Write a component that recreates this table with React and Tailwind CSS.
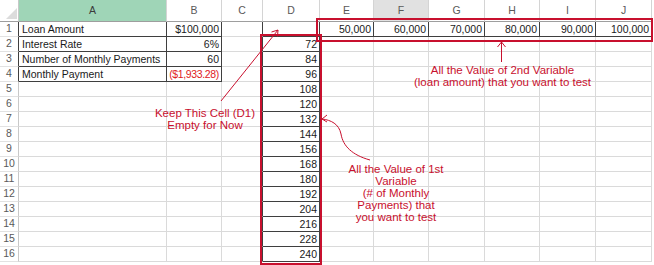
const cols = ["A", "B", "C", "D", "E", "F", "G", "H", "I", "J"];

const cells = {
  A1: "Loan Amount",
  B1: "$100,000",
  A2: "Interest Rate",
  B2: "6%",
  A3: "Number of Monthly Payments",
  B3: "60",
  A4: "Monthly Payment",
  B4: "($1,933.28)",
  E1: "50,000",
  F1: "60,000",
  G1: "70,000",
  H1: "80,000",
  I1: "90,000",
  J1: "100,000",
};
for (let r = 2; r <= 16; r++) cells["D" + r] = String(72 + (r - 2) * 12);

// cells with a dark outline, by column index (0 = A) and row
const isBordered = (c, r) => {
  if (c < 0 || c > 9 || r < 1 || r > 16) return false;
  if (r <= 4 && c <= 1) return true;
  if (c === 3) return true;
  if (r === 1 && c >= 4) return true;
  return false;
};

const Cell = ({ c, r }) => {
  const key = cols[c] + r;
  const value = cells[key];
  const rightDark = isBordered(c, r) || isBordered(c + 1, r);
  const bottomDark = isBordered(c, r) || isBordered(c, r + 1);
  const alignLeft = c === 0;
  return (
    <div
      className={
        "flex items-center overflow-hidden whitespace-nowrap border-r border-b pt-px leading-[13px] " +
        (rightDark ? "border-r-[#3f3f3f] " : "border-r-[#dadada] ") +
        (bottomDark ? "border-b-[#3f3f3f] " : "border-b-[#dadada] ") +
        (alignLeft ? "justify-start pl-[3px] " : "justify-end pr-[2px] ") +
        (key === "B4" ? "text-[#e0201b] tracking-[-0.35px]" : "text-[#1a1a1a]")
      }
    >
      {value}
    </div>
  );
};

const RowHead = ({ r }) => (
  <div
    className={
      "flex items-center justify-center border-r border-b border-b-[#e2e2e2] text-[#595959] bg-white " +
      (r <= 4 ? "border-r-[#3f3f3f]" : "border-r-[#c8c8c8]")
    }
  >
    {r}
  </div>
);

const ColHead = ({ c }) => (
  <div
    className={
      "flex items-center justify-center border-r border-r-[#d4d4d4] border-b border-b-[#9e9e9e] " +
      (c === 0
        ? "bg-[#9fd5b7] text-[#3b3b3b]"
        : c === 5
        ? "bg-[#e1e1e1] text-[#595959]"
        : "bg-white text-[#595959]")
    }
  >
    {cols[c]}
  </div>
);

const Note = ({ className, lines }) => (
  <div
    className={
      "absolute flex flex-col items-center text-[11.5px] leading-[12px] text-[#c8102e] whitespace-nowrap " + className
    }
  >
    {lines.map((l) => (
      <span key={l}>{l}</span>
    ))}
  </div>
);

export default function App() {
  return (
    <div className="relative h-[265px] w-[654px] overflow-hidden bg-white font-['Liberation_Sans',Arial,sans-serif] text-[10.5px]">
      <div className="grid grid-cols-[19px_148px_55px_41px_57px_54px_55px_56px_55px_56px_56px] grid-rows-[22px_repeat(16,15px)]">
        <div className="relative border-r border-r-[#c8c8c8] border-b border-b-[#9e9e9e] bg-white">
          <svg className="absolute left-[6px] top-[8px]" width="11" height="11" viewBox="0 0 11 11">
            <polygon points="11,0 11,11 0,11" fill="#dcdcdc" />
          </svg>
        </div>
        {cols.map((_, c) => (
          <ColHead key={c} c={c} />
        ))}
        {Array.from({ length: 16 }, (_, i) => i + 1).map((r) => [
          <RowHead key={"h" + r} r={r} />,
          ...cols.map((_, c) => <Cell key={c + "-" + r} c={c} r={r} />),
        ])}
      </div>

      {/* red highlight boxes */}
      <div className="absolute left-[260px] top-[34px] h-[231px] w-[62px] border-2 border-[#c8102e]" />
      <div className="absolute left-[316px] top-[18px] h-[24px] w-[337px] border-2 border-[#c8102e]" />

      {/* arrows */}
      <svg className="pointer-events-none absolute left-0 top-0" width="654" height="265" fill="none" stroke="#c8102e" strokeWidth="1">
        <line x1="501.5" y1="62" x2="501.5" y2="42" />
        <polyline points="497.5,47 501.5,42 505.5,47" />
        <line x1="221" y1="101" x2="278" y2="30" />
        <polyline points="271.5,32 278,30 277.5,36.5" />
        <path d="M370 160 C352 155 343 146 341 134 C339 124 331 120 322 119" />
        <polyline points="327,115 322,119 327,122" />
      </svg>

      <Note className="left-[400px] top-[64px] w-[205px]" lines={["All the Value of 2nd Variable", "(loan amount) that you want to test"]} />
      <Note className="left-[150px] top-[107px] w-[110px]" lines={["Keep This Cell (D1)", "Empty for Now"]} />
      <Note className="left-[340px] top-[163px] w-[112px]" lines={["All the Value of 1st", "Variable", "(# of Monthly", "Payments) that", "you want to test"]} />
    </div>
  );
}
